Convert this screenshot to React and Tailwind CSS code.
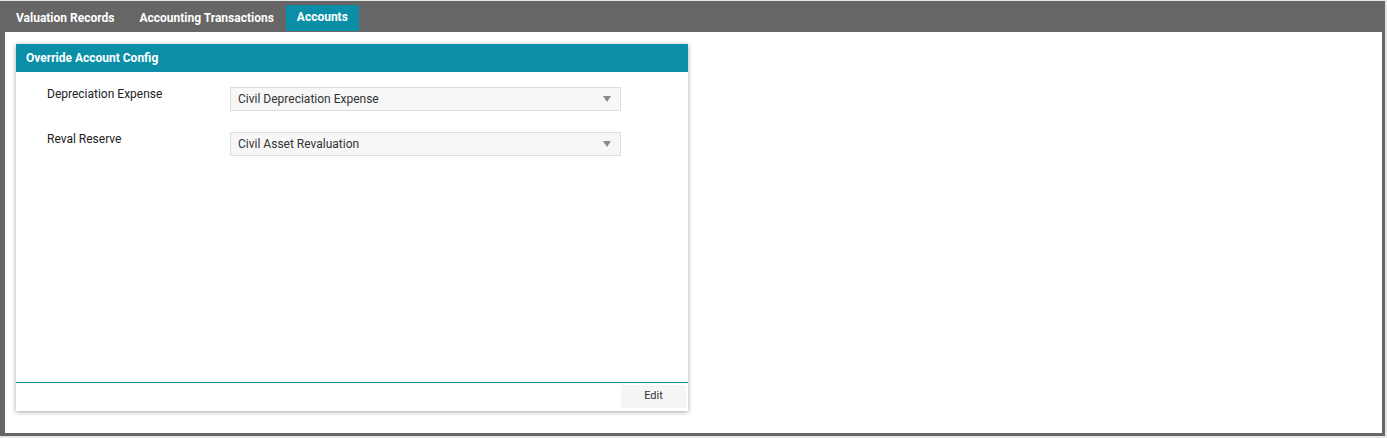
import React from "react";

function Select({ value }) {
  return (
    <div className="w-[391px] h-[24px] bg-[#f7f7f7] border border-[#dedede] flex items-center justify-between pl-[7px] pr-[9px] text-[12px] text-[#333]">
      <span>{value}</span>
      <svg width="8" height="6" viewBox="0 0 8 6">
        <polygon points="0,0 8,0 4,6" fill="#8a8a8a" />
      </svg>
    </div>
  );
}

export default function App() {
  return (
    <div className="w-[1387px] h-[438px] bg-[#e6e6e6] pt-px" style={{ fontFamily: "Roboto, 'Liberation Sans', sans-serif" }}>
      <div className="w-[1385px] h-[435px] bg-[#666666] flex flex-col pl-[5px] pr-[3px] pb-[3px]">
        <div className="h-[31px] flex items-end gap-[3px] pb-px">
          <div className="h-[26px] pl-[11px] pr-[11px] flex items-center text-[12px] font-bold text-white">Valuation Records</div>
          <div className="h-[26px] pl-[11px] pr-[9px] flex items-center text-[12px] font-bold text-white">Accounting Transactions</div>
          <div className="h-[26px] w-[73px] flex items-center justify-center text-[12px] font-bold text-white bg-[#0a8fa6] rounded-t-[2px] pb-[2px]">Accounts</div>
        </div>
        <div className="flex-1 bg-white pl-[11px] pt-[12px]">
          <div className="w-[672px] h-[367px] bg-white flex flex-col shadow-[0_1px_5px_rgba(0,0,0,0.35)]">
            <div className="h-[28px] bg-[#0a8fa6] flex items-center px-[10px] text-[12px] font-bold text-white">Override Account Config</div>
            <div className="flex-1 flex flex-col gap-[21px] pt-[15px] pl-[31px]">
              <div className="flex">
                <div className="w-[183px] text-[12px] text-[#222] -mt-[2px]">Depreciation Expense</div>
                <Select value="Civil Depreciation Expense" />
              </div>
              <div className="flex">
                <div className="w-[183px] text-[12px] text-[#222] -mt-[2px]">Reval Reserve</div>
                <Select value="Civil Asset Revaluation" />
              </div>
            </div>
            <div className="h-[29px] border-t border-[#0a8fa6] flex justify-end items-start pt-[2px] pr-[2px]">
              <button className="w-[65px] h-[23px] bg-[#f5f5f5] text-[11px] text-[#333] flex items-center justify-center">Edit</button>
            </div>
          </div>
        </div>
      </div>
    </div>
  );
}
